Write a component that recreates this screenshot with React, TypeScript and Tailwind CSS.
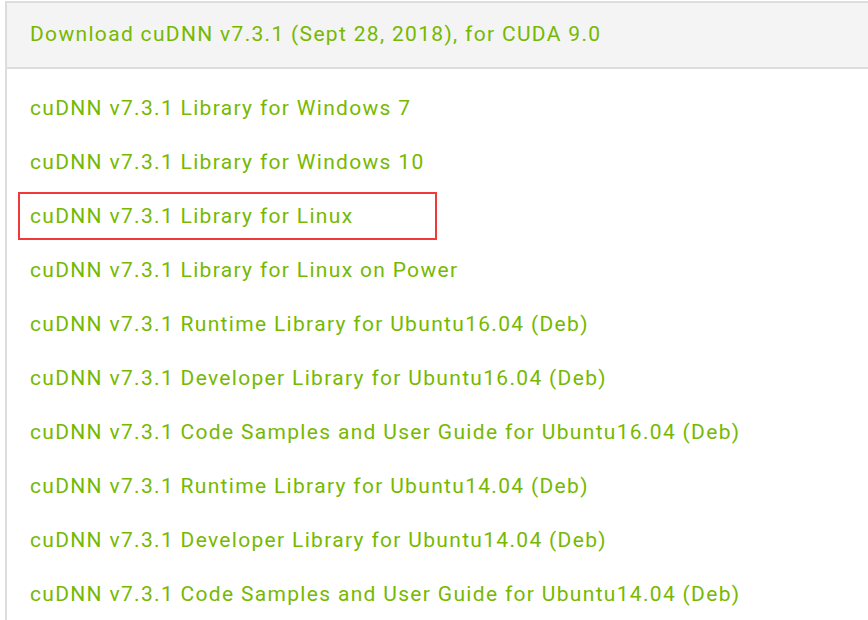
const items = [
  "cuDNN v7.3.1 Library for Windows 7",
  "cuDNN v7.3.1 Library for Windows 10",
  "cuDNN v7.3.1 Library for Linux",
  "cuDNN v7.3.1 Library for Linux on Power",
  "cuDNN v7.3.1 Runtime Library for Ubuntu16.04 (Deb)",
  "cuDNN v7.3.1 Developer Library for Ubuntu16.04 (Deb)",
  "cuDNN v7.3.1 Code Samples and User Guide for Ubuntu16.04 (Deb)",
  "cuDNN v7.3.1 Runtime Library for Ubuntu14.04 (Deb)",
  "cuDNN v7.3.1 Developer Library for Ubuntu14.04 (Deb)",
  "cuDNN v7.3.1 Code Samples and User Guide for Ubuntu14.04 (Deb)",
];

export default function App() {
  return (
    <div className="w-[868px] h-[620px] overflow-hidden bg-white pt-px pl-[5px] font-['Roboto',sans-serif] text-[21px] tracking-[1.32px] text-[#76b900]">
      <div className="border-l-2 border-[#dddddd] h-full">
        <div className="h-[68px] bg-[#f4f4f4] border-t-2 border-b-2 border-[#dddddd] flex items-center pl-[23px]">
          Download cuDNN v7.3.1 (Sept 28, 2018), for CUDA 9.0
        </div>
        <div className="pt-[12px]">
          {items.map((t, i) => (
            <div key={i} className="h-[54px] flex items-center">
              <span
                className={
                  i === 2
                    ? "ml-[11px] w-[419px] h-[48px] border-2 border-[#f03a3a] flex items-center pl-[10px] pt-[2px]"
                    : "ml-[23px] pt-[2px]"
                }
              >
                {t}
              </span>
            </div>
          ))}
        </div>
      </div>
    </div>
  );
}
